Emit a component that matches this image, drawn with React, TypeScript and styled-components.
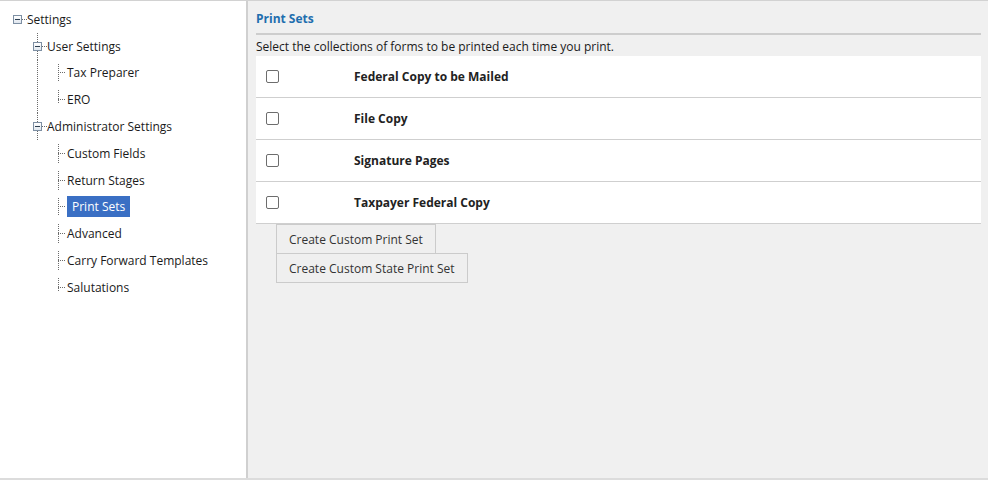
import { useState } from 'react';
import styled, { createGlobalStyle, css } from 'styled-components';

const GlobalStyle = createGlobalStyle`
  html, body {
    margin: 0;
    padding: 0;
    background: #ffffff;
  }
  body {
    font-family: "Open Sans", "Noto Sans", sans-serif;
    font-size: 12px;
    color: #1e1e1e;
  }
`;

const Frame = styled.div`
  display: flex;
  flex-direction: row;
  height: 480px;
  box-sizing: border-box;
  border-top: 1px solid #d2d2d2;
  border-bottom: 2px solid #dcdcdc;
`;

const Sidebar = styled.div`
  width: 246px;
  flex-shrink: 0;
  background: #ffffff;
  border-right: 2px solid #d0d0d0;
  padding-top: 5px;
  box-sizing: content-box;
`;

const Content = styled.div`
  flex: 1;
  background: #f0f0f0;
  padding: 0 7px 0 8px;
  display: flex;
  flex-direction: column;
`;

/* ---------- tree ---------- */

const dotted = (x: number) => css`
  background-image: repeating-linear-gradient(to bottom, #6b6b6b 0 1px, transparent 1px 2px);
  background-repeat: no-repeat;
  background-size: 1px 100%;
  background-position: ${x}px 0;
`;

const Group = styled.div<{ $guide?: number }>`
  ${(p) => (p.$guide !== undefined ? dotted(p.$guide) : '')}
`;

const Row = styled.div<{ $level: number }>`
  display: flex;
  align-items: center;
  height: 26.8px;
  padding-left: ${(p) => 13 + p.$level * 20}px;
  white-space: nowrap;
`;

const Expander = styled.span<{ $stem?: boolean }>`
  position: relative;
  width: 14px;
  height: 100%;
  flex-shrink: 0;
  display: flex;
  align-items: center;

  &::before {
    content: '';
    box-sizing: border-box;
    width: 9px;
    height: 9px;
    border: 1px solid #7d8fa3;
    background: linear-gradient(#ffffff, #dfe6ee);
    z-index: 1;
  }
  &::after {
    content: '';
    position: absolute;
    left: 2px;
    top: calc(50% - 0.5px);
    width: 5px;
    height: 1px;
    background: #2c3e50;
    z-index: 2;
  }
  ${(p) =>
    p.$stem
      ? css`
          background-image: repeating-linear-gradient(to bottom, #6b6b6b 0 1px, transparent 1px 2px),
            repeating-linear-gradient(to right, #6b6b6b 0 1px, transparent 1px 2px);
          background-repeat: no-repeat;
          background-size: 1px 100%, 5px 1px;
          background-position: 4px 0, 9px 50%;
        `
      : css`
          background-image: repeating-linear-gradient(to right, #6b6b6b 0 1px, transparent 1px 2px);
          background-repeat: no-repeat;
          background-size: 5px 1px;
          background-position: 9px 50%;
        `}
`;

const Branch = styled.span<{ $last?: boolean }>`
  width: 14px;
  height: 100%;
  flex-shrink: 0;
  background-image: repeating-linear-gradient(to bottom, #6b6b6b 0 1px, transparent 1px 2px),
    repeating-linear-gradient(to right, #6b6b6b 0 1px, transparent 1px 2px);
  background-repeat: no-repeat;
  background-size: 1px ${(p) => (p.$last ? '50%' : 'calc(100% - 8px)')}, 8px 1px;
  background-position: 5px 4px, 5px 50%;
`;

const Label = styled.span<{ $selected?: boolean }>`
  color: #1a1a1a;
  line-height: 21px;
  ${(p) =>
    p.$selected &&
    css`
      background: #3a6fc4;
      color: #ffffff;
      padding: 0 5px;
    `}
`;

/* ---------- print sets ---------- */

const Heading = styled.div`
  color: #1f6eae;
  font-weight: 700;
  font-size: 12px;
  padding-top: 10px;
  padding-bottom: 6px;
  border-bottom: 2px solid #cdcdcd;
  line-height: 16px;
`;

const Description = styled.div`
  padding: 4px 0 1px;
  line-height: 16px;
  color: #1a1a1a;
`;

const Table = styled.div`
  display: flex;
  flex-direction: column;
  background: #ffffff;
`;

const SetRow = styled.label`
  display: flex;
  align-items: center;
  height: 41px;
  border-bottom: 1px solid #cfcfcf;
  cursor: pointer;
`;

const Check = styled.input`
  appearance: none;
  margin: 0 0 0 10px;
  width: 13px;
  height: 13px;
  border: 1px solid #6d6d6d;
  border-radius: 2px;
  background: #ffffff;
  flex-shrink: 0;
  cursor: pointer;
  &:checked {
    background: #3a6fc4;
    border-color: #3a6fc4;
  }
`;

const SetName = styled.span`
  margin-left: 75px;
  font-weight: 700;
  color: #222222;
`;

const Buttons = styled.div`
  display: flex;
  flex-direction: column;
  align-items: flex-start;
  padding-left: 20px;
`;

const Button = styled.button`
  font-family: inherit;
  font-size: 12px;
  color: #333333;
  background: #efefef;
  border: 1px solid #cbcbcb;
  height: 30px;
  padding: 0 12px;
  margin-bottom: -1px;
  cursor: pointer;
  &:hover {
    background: #e5e5e5;
  }
`;

type Leaf = { label: string; selected?: boolean };

const userLeaves: Leaf[] = [{ label: 'Tax Preparer' }, { label: 'ERO' }];
const adminLeaves: Leaf[] = [
  { label: 'Custom Fields' },
  { label: 'Return Stages' },
  { label: 'Print Sets', selected: true },
  { label: 'Advanced' },
  { label: 'Carry Forward Templates' },
  { label: 'Salutations' },
];

const printSets = [
  'Federal Copy to be Mailed',
  'File Copy',
  'Signature Pages',
  'Taxpayer Federal Copy',
];

function Leaves({ items }: { items: Leaf[] }) {
  return (
    <>
      {items.map((it, i) => (
        <Row key={it.label} $level={2}>
          <Branch $last={i === items.length - 1} />
          <Label $selected={it.selected}>{it.label}</Label>
        </Row>
      ))}
    </>
  );
}

export default function App() {
  const [checked, setChecked] = useState<Record<string, boolean>>({});

  return (
    <>
      <GlobalStyle />
      <Frame>
        <Sidebar>
          <Row $level={0}>
            <Expander />
            <Label>Settings</Label>
          </Row>
          <Row $level={1}>
            <Expander $stem />
            <Label>User Settings</Label>
          </Row>
          <Group $guide={37}>
            <Leaves items={userLeaves} />
          </Group>
          <Row $level={1}>
            <Expander $stem />
            <Label>Administrator Settings</Label>
          </Row>
          <Leaves items={adminLeaves} />
        </Sidebar>
        <Content>
          <Heading>Print Sets</Heading>
          <Description>Select the collections of forms to be printed each time you print.</Description>
          <Table>
            {printSets.map((name) => (
              <SetRow key={name}>
                <Check
                  type="checkbox"
                  checked={!!checked[name]}
                  onChange={() => setChecked((c) => ({ ...c, [name]: !c[name] }))}
                />
                <SetName>{name}</SetName>
              </SetRow>
            ))}
          </Table>
          <Buttons>
            <Button>Create Custom Print Set</Button>
            <Button>Create Custom State Print Set</Button>
          </Buttons>
        </Content>
      </Frame>
    </>
  );
}
